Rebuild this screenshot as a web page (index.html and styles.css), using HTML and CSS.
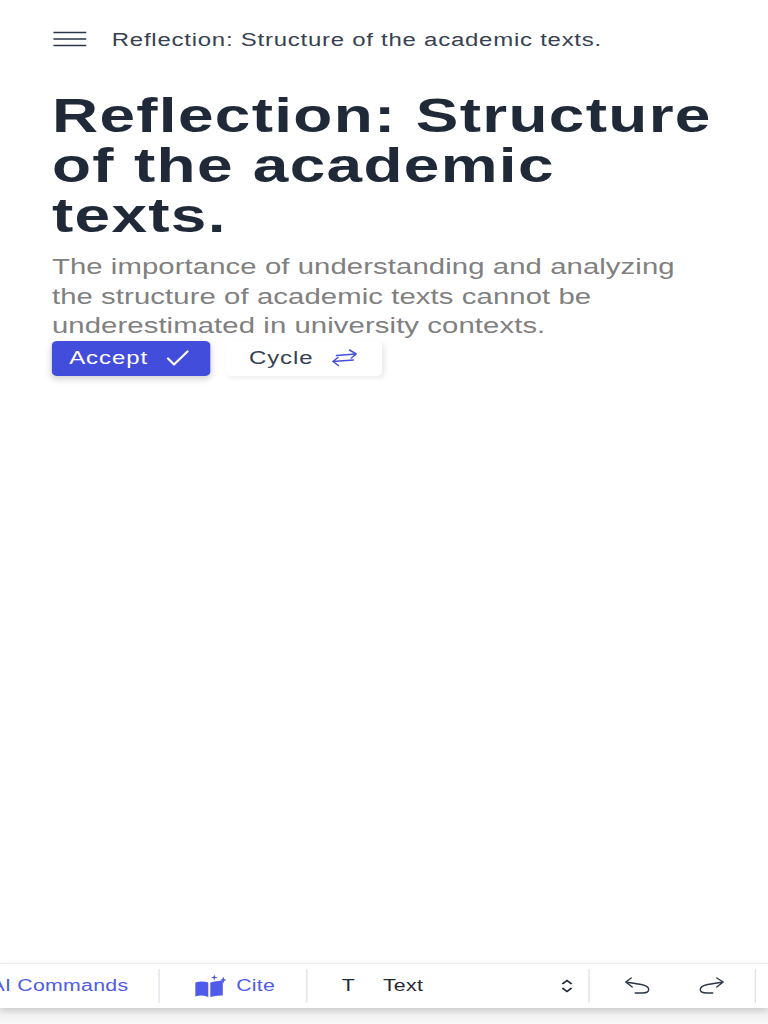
FILE: index.html
```html
<!DOCTYPE html>
<html lang="en">
<head>
<meta charset="utf-8">
<title>Reflection</title>
<link rel="stylesheet" href="styles.css">
</head>
<body>
<div class="page">
  <header class="topbar">
    <svg class="menu-icon" viewBox="0 0 25 16" preserveAspectRatio="none" fill="none" stroke="#2b3545" stroke-width="1.600"><path d="M0 1.500h25M0 8h25M0 14.500h25"/></svg>
    <span class="topbar-title">Reflection: Structure of the academic texts.</span>
  </header>
  <main class="content">
    <h1 class="title">Reflection: Structure of the academic texts.</h1>
    <p class="lead">The importance of understanding and analyzing the structure of academic texts cannot be underestimated in university contexts.</p>
    <div class="actions">
      <button class="btn btn-primary">Accept
        <svg class="icon-check" viewBox="0 0 24 16" preserveAspectRatio="none" fill="none" stroke="#fff" stroke-width="2.200" stroke-linecap="round" stroke-linejoin="round"><path d="M3 8.500 9 14.500 22.500 1.500"/></svg>
      </button>
      <button class="btn btn-plain">Cycle
        <svg class="icon-cycle" viewBox="0 0 26 18" preserveAspectRatio="none" fill="none" stroke="#4650e0" stroke-width="1.500" stroke-linecap="round" stroke-linejoin="round"><path d="M5 6.500 25 5M18 1 25 5 20 9M22 11 1.500 12.500M6.500 8.500 1.500 12.500 7 16.500"/></svg>
      </button>
    </div>
  </main>
  <div class="toolbar">
    <span class="tool tool-link">AI Commands</span>
    <span class="sep"></span>
    <span class="tool-link tool-cite">
      <svg class="cite-icon" viewBox="0 0 32 24" preserveAspectRatio="none" fill="#4f5bea"><path d="M1 8.500Q7 6.500 14 8.500V23Q7 20.500 1 22.500zM16 8.500Q21 7 28.500 6.500V21.500Q22 21 16 23z"/><path d="M20 0.500l.8 2.200 2.700.8-2.700.8-.8 2.200-.8-2.200-2.700-.8 2.700-.8zM29 2.500l.9 2.600 2.100.9-2.100.9-.9 2.600-.9-2.600-2.100-.9 2.100-.9z"/></svg>
      Cite
    </span>
    <span class="sep"></span>
    <span class="tool-select">
      <span class="t-glyph">T</span>
      <span class="t-label">Text</span>
      <svg class="updown" viewBox="0 0 10 14" preserveAspectRatio="none" fill="none" stroke="#1f2937" stroke-width="1.500"><path d="M1.500 5 5 1.500 8.500 5M1.500 9 5 12.500 8.500 9"/></svg>
    </span>
    <span class="sep"></span>
    <span class="history">
      <svg class="hist-icon" viewBox="0 0 26 18" preserveAspectRatio="none" fill="none" stroke="#2b3545" stroke-width="1.400" stroke-linecap="round" stroke-linejoin="round"><path d="M7 1 1.500 5 8 10M1.500 5 17 7.500Q24.500 9 24.500 12.500T18 16H11"/></svg>
      <svg class="hist-icon" viewBox="0 0 26 18" preserveAspectRatio="none" fill="none" stroke="#2b3545" stroke-width="1.400" stroke-linecap="round" stroke-linejoin="round"><path d="M18 1 24.500 5 18 10M24.500 5 9 7.500Q1.500 9 1.500 12.500T8 16H14"/></svg>
    </span>
    <span class="sep"></span>
  </div>
  <div class="footer-strip"></div>
</div>
</body>
</html>
```
FILE: styles.css
```css
html, body {
  margin: 0;
  padding: 0;
  height: 100%;
  overflow: hidden;
  background: #fff;
}
.page {
  width: 577px;
  height: 1024px;
  transform: scaleX(1.331);
  transform-origin: 0 0;
  display: flex;
  flex-direction: column;
  font-family: "Liberation Sans", Arial, sans-serif;
  overflow: hidden;
}
.topbar {
  display: flex;
  align-items: center;
  height: 78px;
  padding-left: 40px;
  flex: none;
}
.menu-icon {
  width: 25px;
  height: 16px;
  margin-right: 19px;
}
.topbar-title {
  font-size: 18px;
  letter-spacing: .57px;
  color: #374151;
  position: relative;
  top: 1px;
}
.content {
  flex: 1;
  padding: 13px 40px 0 39px;
}
.title {
  margin: 0;
  font-size: 48px;
  line-height: 50px;
  font-weight: 700;
  letter-spacing: 1px;
  color: #1f2937;
}
.lead {
  margin: 11px 0 0;
  font-size: 22px;
  line-height: 29.500px;
  letter-spacing: .07px;
  color: #808080;
  max-width: 490px;
}
.actions {
  display: flex;
  gap: 12px;
  margin-top: 0;
}
.btn {
  display: flex;
  align-items: center;
  height: 35px;
  border: 0;
  border-radius: 4px;
  font: 18px "Liberation Sans", Arial, sans-serif;
  letter-spacing: .7px;
}
.btn-primary {
  width: 119px;
  gap: 13px;
  padding: 0 0 0 13px;
  background: #434ddb;
  color: #fff;
  box-shadow: 0 3px 6px rgba(0, 0, 0, .18);
}
.btn-plain {
  width: 117px;
  gap: 13px;
  padding: 0 0 0 17px;
  background: #fff;
  color: #374151;
  box-shadow: 2px 2px 5px rgba(0, 0, 0, .08);
}
.icon-check {
  width: 18px;
  height: 16px;
}
.icon-cycle {
  width: 19.500px;
  height: 18px;
}
.toolbar {
  flex: none;
  display: flex;
  align-items: center;
  justify-content: flex-end;
  height: 44px;
  padding-right: 9px;
  border-top: 1px solid #eee;
  background: #fff;
  box-shadow: 0 3px 6px rgba(0, 0, 0, .15);
  white-space: nowrap;
  position: relative;
}
.footer-strip {
  flex: none;
  height: 16px;
  background: linear-gradient(#eeeeee, #f8f8f8);
}
.tool-link {
  color: #4f5bea;
  font-size: 16px;
  letter-spacing: .2px;
}
.tool-cite {
  flex: none;
  display: flex;
  align-items: center;
  gap: 7px;
  margin: 0 23px 0 26px;
}
.cite-icon {
  width: 24px;
  height: 24px;
}
.tool {
  flex: none;
  margin-right: 23px;
}
.sep {
  flex: none;
  width: 1px;
  height: 34px;
  background: #e0e2ea;
}
.tool-select {
  flex: none;
  display: flex;
  align-items: center;
  width: 211.600px;
  font-size: 16px;
  letter-spacing: .2px;
  color: #1f2937;
}
.t-glyph {
  margin-left: 26px;
  width: 31px;
}
.t-label {
  flex: 1;
}
.updown {
  width: 10px;
  height: 14px;
  margin-right: 11px;
}
.history {
  flex: none;
  display: flex;
  gap: 36px;
  width: 123.700px;
  padding-left: 26px;
  box-sizing: border-box;
}
.hist-icon {
  width: 19.500px;
  height: 18px;
}
```
